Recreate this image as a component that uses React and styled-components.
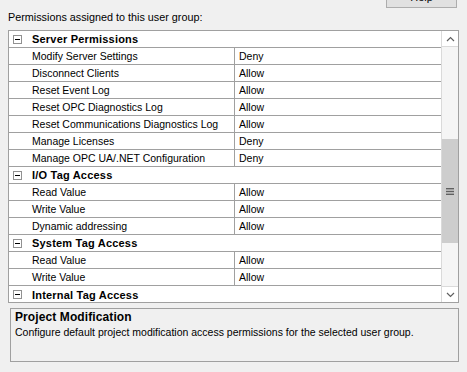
import React from 'react';
import styled, { createGlobalStyle } from 'styled-components';

const GlobalStyle = createGlobalStyle`
html, body {
    margin:0;
    padding:0;
    background:#f0f0f0;
}
body {
    width:467px;
    height:372px;
    overflow:hidden;
    font-family:"Liberation Sans", Arial, sans-serif;
    font-size:10.5px;
    color:#000;
}
`;

const Page = styled.div`
width:467px;
height:372px;
display:flex;
flex-direction:column;
`;

const Header = styled.div`
height:30px;
display:flex;
justify-content:space-between;
align-items:flex-start;
padding:0 10px 0 8px;
box-sizing:border-box;
`;

const Caption = styled.div`
margin-top:11px;
line-height:13px;
font-size:10.8px;
`;

const HelpButton = styled.button`
margin-top:-16px;
width:71px;
height:24px;
border:1px solid #adadad;
background:#e1e1e1;
font-family:inherit;
font-size:11px;
padding:0;
display:flex;
align-items:flex-end;
justify-content:center;
padding-bottom:4px;
box-sizing:border-box;
`;

const Grid = styled.div`
margin:0 8px 0 8px;
width:451px;
height:273px;
box-sizing:border-box;
border:1px solid #a0a0a0;
background:#fff;
display:flex;
overflow:hidden;
`;

const Rows = styled.div`
width:433px;
display:flex;
flex-direction:column;
`;

const Row = styled.div`
display:flex;
height:17px;
box-sizing:border-box;
border-bottom:${p => (p.last ? 'none' : '1px solid #a0a0a0')};
line-height:16px;
flex-shrink:0;
`;

const NameCell = styled.div`
width:225px;
padding-left:${p => (p.category ? '4px' : '23px')};
box-sizing:border-box;
display:flex;
align-items:center;
font-weight:${p => (p.category ? 'bold' : 'normal')};
font-size:${p => (p.category ? '11px' : '10.5px')};
letter-spacing:${p => (p.category ? '0.2px' : '0')};
white-space:nowrap;
`;

const ValueCell = styled.div`
flex:1;
border-left:1px solid #a0a0a0;
padding-left:4px;
white-space:nowrap;
`;

const Toggle = styled.span`
width:9px;
height:9px;
box-sizing:border-box;
border:1px solid #919191;
margin-right:10px;
position:relative;
flex-shrink:0;
&::after {
    content:'';
    position:absolute;
    left:1px;
    top:3px;
    width:5px;
    height:1px;
    background:#000;
}
`;

const ScrollBar = styled.div`
width:16px;
border-left:1px solid #dadada;
background:#f5f5f5;
display:flex;
flex-direction:column;
`;

const ArrowBox = styled.div`
height:16px;
flex-shrink:0;
display:flex;
align-items:center;
justify-content:center;
background:#fff;
border-${p => (p.down ? 'top' : 'bottom')}:1px solid #dadada;
box-sizing:border-box;
`;

const Track = styled.div`
flex:1;
display:flex;
flex-direction:column;
`;

const TrackSpace = styled.div`
height:${p => p.h}px;
flex-shrink:0;
`;

const Thumb = styled.div`
height:104px;
background:#cdcdcd;
display:flex;
align-items:center;
justify-content:center;
flex-shrink:0;
`;

const Description = styled.div`
margin:5px 8px 0 10px;
height:54px;
box-sizing:border-box;
border:1px solid #a0a0a0;
background:#f0f0f0;
padding:1px 4px;
line-height:14px;
`;

const DescTitle = styled.div`
font-weight:bold;
font-size:12px;
letter-spacing:0.1px;
line-height:15px;
`;

const Arrow = ({ down }) => (
    <svg width="9" height="6" viewBox="0 0 9 6">
        <polyline
            points={down ? '1,1 4.5,4.5 8,1' : '1,5 4.5,1.5 8,5'}
            fill="none"
            stroke="#606060"
            strokeWidth="1.2"
        />
    </svg>
);

const Grip = () => (
    <svg width="8" height="7" viewBox="0 0 8 7">
        <rect x="0" y="0" width="8" height="1.4" fill="#606060" />
        <rect x="0" y="2.8" width="8" height="1.4" fill="#606060" />
        <rect x="0" y="5.6" width="8" height="1.4" fill="#606060" />
    </svg>
);

const data = [
    { category: 'Server Permissions', items: [
        ['Modify Server Settings', 'Deny'],
        ['Disconnect Clients', 'Allow'],
        ['Reset Event Log', 'Allow'],
        ['Reset OPC Diagnostics Log', 'Allow'],
        ['Reset Communications Diagnostics Log', 'Allow'],
        ['Manage Licenses', 'Deny'],
        ['Manage OPC UA/.NET Configuration', 'Deny'],
    ] },
    { category: 'I/O Tag Access', items: [
        ['Read Value', 'Allow'],
        ['Write Value', 'Allow'],
        ['Dynamic addressing', 'Allow'],
    ] },
    { category: 'System Tag Access', items: [
        ['Read Value', 'Allow'],
        ['Write Value', 'Allow'],
    ] },
    { category: 'Internal Tag Access', items: [] },
];

const App = () => {
    const rows = [];
    data.forEach((group) => {
        rows.push({ category: true, name: group.category });
        group.items.forEach(([name, value]) => rows.push({ name, value }));
    });

    return (
        <Page>
            <GlobalStyle />
            <Header>
                <Caption>Permissions assigned to this user group:</Caption>
                <HelpButton>Help</HelpButton>
            </Header>
            <Grid>
                <Rows>
                    {rows.map((row, index) => (
                        <Row key={index} last={index === rows.length - 1}>
                            <NameCell category={row.category}>
                                {row.category && <Toggle />}
                                {row.name}
                            </NameCell>
                            {!row.category && <ValueCell>{row.value}</ValueCell>}
                        </Row>
                    ))}
                </Rows>
                <ScrollBar>
                    <ArrowBox><Arrow /></ArrowBox>
                    <Track>
                        <TrackSpace h={92} />
                        <Thumb><Grip /></Thumb>
                    </Track>
                    <ArrowBox down><Arrow down /></ArrowBox>
                </ScrollBar>
            </Grid>
            <Description>
                <DescTitle>Project Modification</DescTitle>
                <div>Configure default project modification access permissions for the selected user group.</div>
            </Description>
        </Page>
    );
};

export default App;
